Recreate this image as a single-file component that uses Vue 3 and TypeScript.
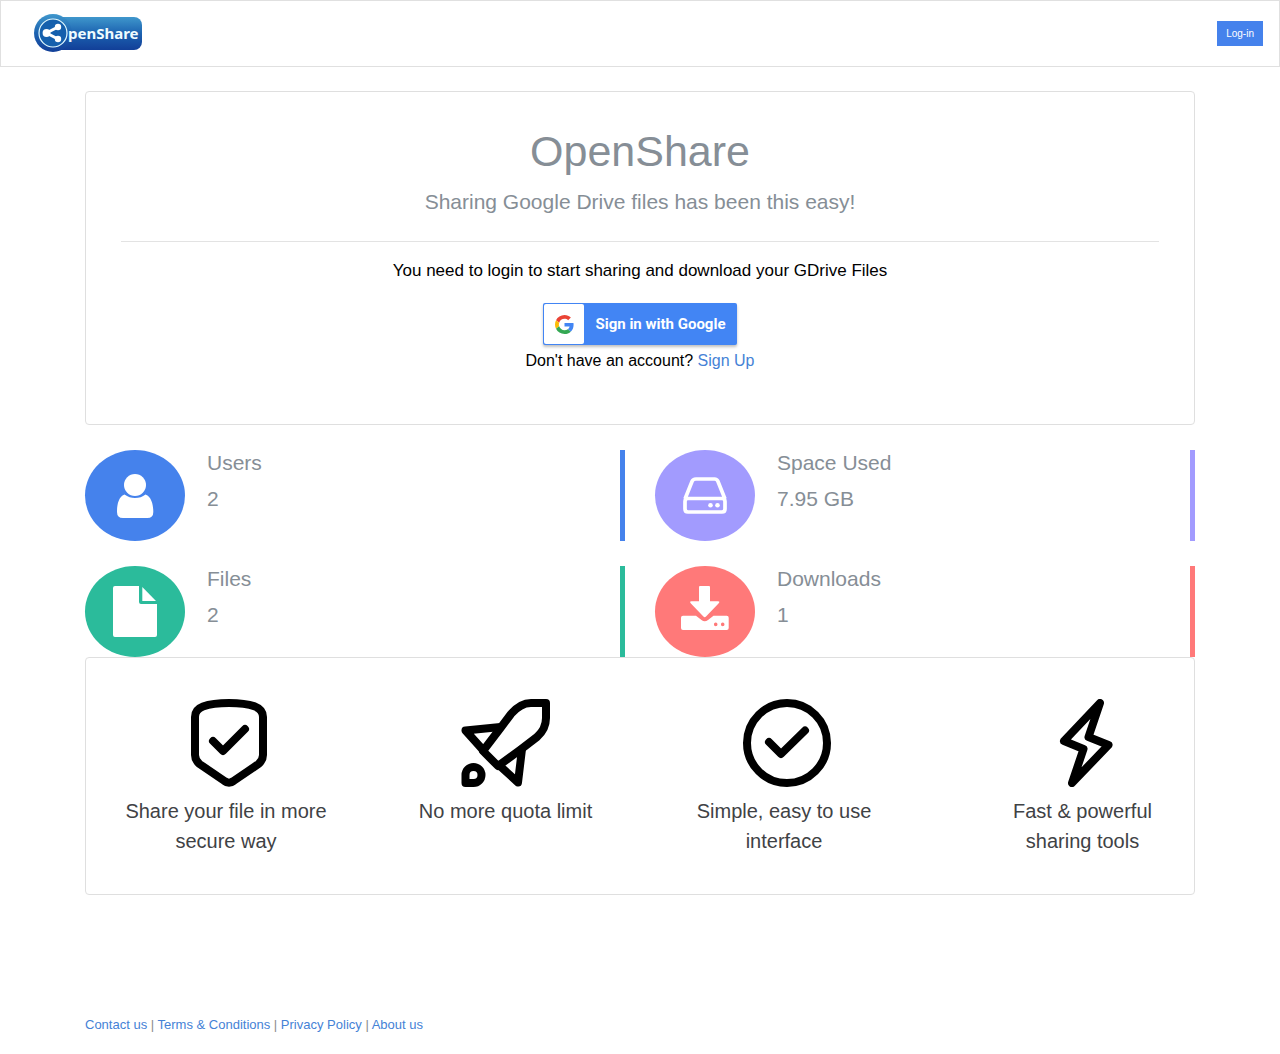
<script setup lang="ts">
interface Stat {
  key: 'users' | 'space' | 'files' | 'downloads'
  label: string
  value: string
}

interface Feature {
  key: 'shield' | 'rocket' | 'circle' | 'bolt'
  caption: string
}

const stats: Stat[] = [
  { key: 'users', label: 'Users', value: '2' },
  { key: 'space', label: 'Space Used', value: '7.95 GB' },
  { key: 'files', label: 'Files', value: '2' },
  { key: 'downloads', label: 'Downloads', value: '1' },
]

const features: Feature[] = [
  { key: 'shield', caption: 'Share your file in more\nsecure way' },
  { key: 'rocket', caption: 'No more quota limit' },
  { key: 'circle', caption: 'Simple, easy to use\ninterface' },
  { key: 'bolt', caption: 'Fast & powerful\nsharing tools' },
]

const footerLinks: string[] = ['Contact us', 'Terms & Conditions', 'Privacy Policy', 'About us']
</script>

<template>
  <div class="page">
    <header class="navbar">
      <a class="brand" href="#" aria-label="OpenShare">
        <svg width="108" height="38" viewBox="0 0 108 38">
          <defs>
            <linearGradient id="brandFill" x1="0" y1="0" x2="0" y2="1">
              <stop offset="0" stop-color="#3f97cc" />
              <stop offset="0.5" stop-color="#1c62b0" />
              <stop offset="1" stop-color="#123f98" />
            </linearGradient>
          </defs>
          <rect x="12" y="3" width="96" height="33" rx="8" fill="url(#brandFill)" />
          <circle cx="19" cy="19" r="19" fill="url(#brandFill)" />
          <circle cx="19" cy="19" r="14" fill="#1560ad" stroke="#e4fbff" stroke-width="1.2" />
          <path d="M24 13 12.500 19 24 25" fill="none" stroke="#fff" stroke-width="3" />
          <circle cx="24" cy="13" r="3.200" fill="#fff" />
          <circle cx="12.500" cy="19" r="3.900" fill="#fff" />
          <circle cx="24" cy="25" r="3.200" fill="#fff" />
          <text class="brand-text" x="34" y="25" fill="#effcff">penShare</text>
        </svg>
      </a>
      <button class="login" type="button">Log-in</button>
    </header>

    <main class="container">
      <section class="card hero">
        <h1>OpenShare</h1>
        <p class="lead">Sharing Google Drive files has been this easy!</p>
        <hr />
        <p class="prompt">You need to login to start sharing and download your GDrive Files</p>
        <button class="google" type="button">
          <span class="google-mark">
            <svg width="19" height="19" viewBox="0 0 48 48" aria-hidden="true">
              <path fill="#EA4335" d="M24 9.500c3.540 0 6.710 1.220 9.210 3.600l6.850-6.850C35.900 2.380 30.470 0 24 0 14.620 0 6.510 5.380 2.560 13.220l7.980 6.190C12.430 13.720 17.740 9.500 24 9.500z" />
              <path fill="#4285F4" d="M46.980 24.550c0-1.570-.15-3.090-.38-4.550H24v9.020h12.940c-.58 2.960-2.260 5.480-4.780 7.180l7.730 6c4.510-4.180 7.090-10.360 7.090-17.650z" />
              <path fill="#FBBC05" d="M10.530 28.590c-.48-1.450-.76-2.990-.76-4.590s.27-3.140.76-4.590l-7.980-6.190C.92 16.460 0 20.120 0 24c0 3.880.92 7.540 2.560 10.780l7.970-6.190z" />
              <path fill="#34A853" d="M24 48c6.480 0 11.930-2.130 15.890-5.810l-7.730-6c-2.150 1.450-4.920 2.300-8.160 2.300-6.260 0-11.570-4.220-13.470-9.910l-7.980 6.190C6.510 42.620 14.620 48 24 48z" />
            </svg>
          </span>
          <span class="google-label">Sign in with Google</span>
        </button>
        <p class="signup">Don't have an account? <a href="#">Sign Up</a></p>
      </section>

      <section class="stats">
        <article v-for="stat in stats" :key="stat.key" class="stat" :class="stat.key">
          <div class="stat-icon">
            <svg width="100" height="91" viewBox="0 0 100 91" fill="#fff" aria-hidden="true">
              <g v-if="stat.key === 'users'">
                <circle cx="50" cy="35" r="11" />
                <path d="M39.500 44.500C33 47 32 56 32 62Q32 68 38 68H62.300Q68.300 68 68.300 62C68.300 56 67 47 60.500 44.500Q56 48 50 48Q44.500 48 39.500 44.500Z" />
              </g>
              <g v-else-if="stat.key === 'space'">
                <path d="M30 49 37 31.500Q38 29 41 29H59.500Q62 29 63 31.500L70 49M33 48.500H67Q70 48.500 70 51.500V59Q70 62 67 62H33Q30 62 30 59V51.500Q30 48.500 33 48.500Z" fill="none" stroke="#fff" stroke-width="3.700" />
                <circle cx="55.500" cy="55.200" r="2.300" />
                <circle cx="62.500" cy="55.200" r="2.300" />
              </g>
              <g v-else-if="stat.key === 'files'">
                <path d="M30 20H54V36Q54 38 56 38H72V69Q72 71 70 71H30Q28 71 28 69V22Q28 20 30 20Z" />
                <path d="M57.300 21 71 35H57.300Z" />
              </g>
              <g v-else>
                <path d="M45 20H54Q55 20 55 21V35.300H63Q65.500 35.300 63.500 37.500L51 50.500Q49.700 51.800 48.400 50.500L35.900 37.500Q34 35.300 36.500 35.300H44V21Q44 20 45 20Z" />
                <path fill-rule="evenodd" d="M28 49.700H41L46.500 54Q49.700 56.500 53 54L58.500 49.700H71.700Q73.700 49.700 73.700 51.700V62Q73.700 64 71.700 64H28Q26 64 26 62V51.700Q26 49.700 28 49.700ZM60.700 56.600a1.800 1.800 0 1 0 0 3.600a1.800 1.800 0 1 0 0-3.600ZM67.700 56.600a1.800 1.800 0 1 0 0 3.600a1.800 1.800 0 1 0 0-3.600Z" />
              </g>
            </svg>
          </div>
          <div class="stat-text">
            <p>{{ stat.label }}</p>
            <p>{{ stat.value }}</p>
          </div>
        </article>
      </section>

      <section class="card features">
        <article v-for="feature in features" :key="feature.key" class="feature">
          <svg
            width="96"
            height="88"
            viewBox="0 0 96 88"
            fill="none"
            stroke="#000"
            stroke-width="8"
            stroke-linecap="round"
            stroke-linejoin="round"
            aria-hidden="true"
          >
            <g v-if="feature.key === 'shield'">
              <path d="M51 4C62 4 70 5 77 7.500Q85 10.500 85 18V56Q85 61 80.500 65L55.500 82Q51 85.500 46.500 82L21.500 65Q17 61 17 56V18Q17 10.500 25 7.500C32 5 40 4 51 4Z" />
              <path d="M35 42 45 52 67 30" />
            </g>
            <g v-else-if="feature.key === 'rocket'">
              <path d="M88 4H73C65 4 59 8 53 15L42.500 29 25 52 40 67 64 49.500 79 38Q88 30 88 19Z" />
              <path d="M42.500 28 7.500 31.500 25 51M64 50 60 83.500 42 67" />
              <path d="M7.500 84V76A8 8 0 1 1 15.500 84Z" />
            </g>
            <g v-else-if="feature.key === 'circle'">
              <circle cx="51" cy="44" r="40" />
              <path d="M33 43 45 55 69 31.500" />
            </g>
            <path v-else d="M65 4 53.500 38 73.500 46 37 84 48.500 50 29 42Z" />
          </svg>
          <p>{{ feature.caption }}</p>
        </article>
      </section>
    </main>

    <footer class="container footer">
      <template v-for="(link, index) in footerLinks" :key="link">
        <span v-if="index > 0"> | </span><a href="#">{{ link }}</a>
      </template>
    </footer>
  </div>
</template>

<style>
body {
  margin: 0;
  background: #fff;
}
</style>

<style scoped>
.page {
  font-family: "Liberation Sans", Arial, Helvetica, sans-serif;
  font-size: 16px;
  line-height: 24px;
  color: #000;
}

.page * {
  box-sizing: border-box;
}

p,
h1 {
  margin: 0;
  font-weight: 400;
}

a {
  color: #4582d6;
  text-decoration: none;
}

button {
  border: 0;
  font-family: inherit;
  cursor: pointer;
}

.navbar {
  display: flex;
  align-items: center;
  justify-content: space-between;
  padding: 13px 16px 14px 33px;
  border: 1px solid #e0e0e0;
}

.brand svg {
  display: block;
}

.brand-text {
  font-family: "Noto Sans", "Open Sans", sans-serif;
  font-size: 15px;
  font-weight: 700;
}

.login {
  height: 25px;
  padding: 0 9px;
  background: #4582ec;
  color: #fff;
  font-size: 10px;
}

.container {
  max-width: 1140px;
  margin: 0 auto;
  padding: 0 15px;
  box-sizing: border-box;
}

.card {
  border: 1px solid #dfdfdf;
  border-radius: 4px;
}

.hero {
  margin-top: 24px;
  padding: 33px 35px 51px;
  text-align: center;
}

.hero h1 {
  font-size: 43px;
  line-height: 52px;
  color: #868e96;
}

.lead {
  margin-top: 9px;
  font-size: 21px;
  line-height: 32px;
  color: #868e96;
}

hr {
  height: 1px;
  margin: 23px 0 16px;
  border: 0;
  background: #e3e3e3;
}

.prompt {
  font-size: 17px;
  line-height: 26px;
}

.google {
  display: inline-flex;
  align-items: center;
  margin-top: 19px;
  padding: 1px;
  border-radius: 2px;
  background: #4285f4;
  box-shadow: 0 2px 3px rgba(0, 0, 0, 0.25);
  color: #fff;
  vertical-align: top;
}

.google-mark {
  display: flex;
  align-items: center;
  justify-content: center;
  width: 40px;
  height: 40px;
  border-radius: 2px;
  background: #fff;
}

.google-label {
  padding: 0 10px 0 11px;
  font-family: Roboto, sans-serif;
  font-size: 15px;
  font-weight: 700;
}

.signup {
  margin-top: 4px;
}

.stats {
  display: grid;
  grid-template-columns: 1fr 1fr;
  gap: 25px 30px;
  margin-top: 25px;
}

.stat {
  display: flex;
  border-right: 5px solid var(--tone);
}

.users {
  --tone: #4582ec;
}

.space {
  --tone: #a29bfe;
}

.files {
  --tone: #2bbb9b;
}

.downloads {
  --tone: #ff7979;
}

.stat-icon {
  height: 91px;
  border-radius: 50%;
  background: var(--tone);
}

.stat-icon svg {
  display: block;
}

.stat-text {
  padding-left: 22px;
  color: #868e96;
  font-size: 21px;
  line-height: 26px;
}

.stat-text p + p {
  margin-top: 10px;
}

.features {
  display: grid;
  grid-template-columns: 280fr 279fr 278fr 271fr;
  padding: 41px 0 38px;
}

.feature {
  display: flex;
  flex-direction: column;
  align-items: center;
}

.feature:last-child {
  padding-left: 48px;
}

.feature p {
  margin-top: 9px;
  font-size: 20px;
  line-height: 30px;
  color: #3f4245;
  text-align: center;
  white-space: pre-line;
}

.footer {
  margin-top: 120px;
  padding-bottom: 19px;
  font-size: 13px;
  line-height: 20px;
  color: #8b8b8b;
}
</style>
